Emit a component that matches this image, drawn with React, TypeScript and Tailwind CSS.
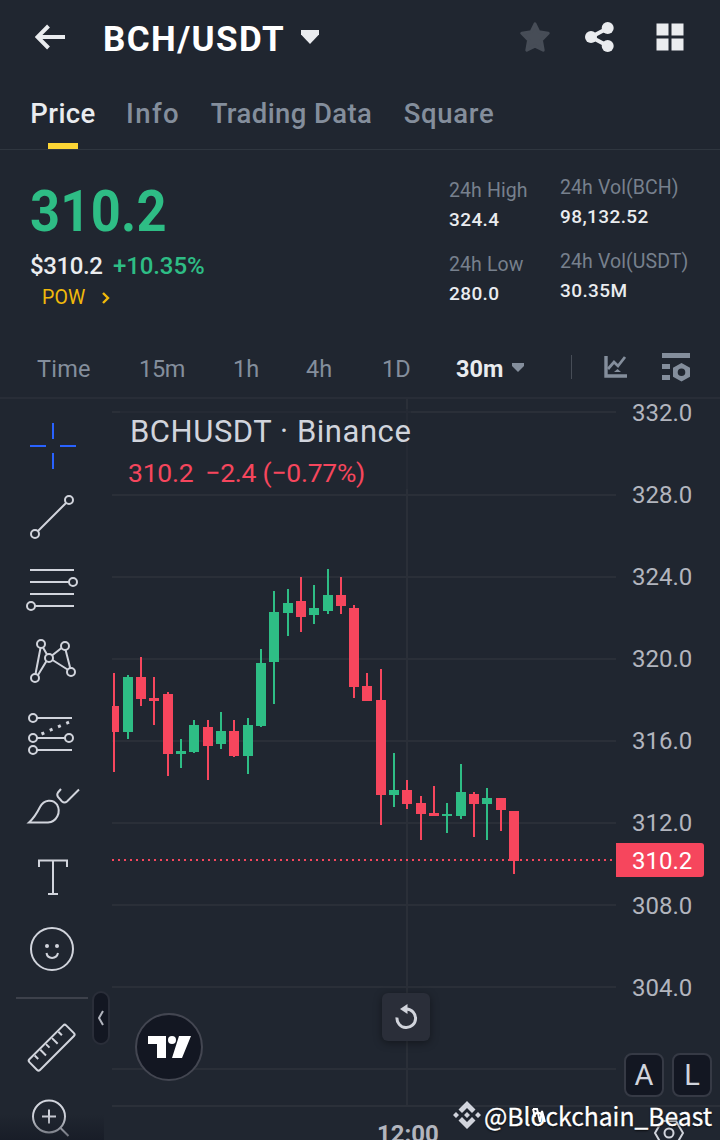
import React, { useState } from "react";

const UP = "#2ebd85";
const DOWN = "#f6465d";

// x, high, body top, body bottom, low, rising
type Candle = [number, number, number, number, number, boolean];

const candles: Candle[] = [
  [114, 673, 706, 732, 772, false],
  [128, 675, 677, 732, 739, true],
  [141, 657, 677, 699, 706, false],
  [154, 677, 698, 701, 725, false],
  [168, 692, 694, 754, 776, false],
  [181, 739, 751, 754, 768, true],
  [194, 720, 725, 752, 753, true],
  [208, 720, 727, 746, 780, false],
  [221, 712, 731, 744, 749, true],
  [234, 720, 731, 756, 757, false],
  [248, 718, 725, 756, 774, true],
  [261, 649, 663, 726, 727, true],
  [274, 591, 612, 662, 704, true],
  [288, 589, 603, 613, 636, true],
  [301, 577, 601, 617, 632, false],
  [314, 585, 608, 615, 624, true],
  [328, 569, 595, 611, 614, true],
  [341, 577, 595, 606, 614, false],
  [354, 605, 608, 687, 698, false],
  [367, 673, 686, 701, 701, false],
  [381, 669, 700, 795, 825, false],
  [394, 753, 790, 795, 807, true],
  [407, 780, 790, 804, 809, false],
  [421, 796, 803, 814, 840, false],
  [434, 786, 813, 816, 816, false],
  [447, 803, 814, 816, 833, true],
  [461, 764, 792, 816, 819, true],
  [474, 792, 794, 804, 837, false],
  [487, 788, 798, 804, 840, true],
  [501, 798, 798, 810, 831, false],
  [514, 811, 811, 861, 874, false],
];

const gridLines = [412, 495, 577, 659, 741, 823, 905, 987, 1069];
const prices = ["332.0", "328.0", "324.0", "320.0", "316.0", "312.0", "308.0", "304.0"];

const stats = [
  {
    className: "w-[111px] pt-[3px]",
    items: [
      { label: "24h High", value: "324.4" },
      { label: "24h Low", value: "280.0" },
    ],
  },
  {
    className: "w-[150px]",
    items: [
      { label: "24h Vol(BCH)", value: "98,132.52" },
      { label: "24h Vol(USDT)", value: "30.35M" },
    ],
  },
];

const tabs = [
  { name: "Price", className: "w-[64px] tracking-[0.4px]" },
  { name: "Info", className: "w-[54px] tracking-[1.4px]" },
  { name: "Trading Data", className: "w-[161px] tracking-[0.4px]" },
  { name: "Square", className: "w-[92px] tracking-[0.7px]" },
];

const Header = () => (
  <header className="flex h-[74px] items-center pl-[35px] pr-[36px] text-[#eaecef]">
    <svg width="30" height="26" viewBox="0 0 30 26" fill="none" stroke="currentColor" strokeWidth="4">
      <path d="M30 13H3M13.5 2 2.5 13l11 11" />
    </svg>
    <h1 className="ml-[38px] w-[184px] whitespace-nowrap pt-[5px] text-[35px] font-bold leading-none tracking-[1.4px] text-white">
      BCH/USDT
    </h1>
    <svg className="ml-[14px]" width="18" height="14" viewBox="0 0 18 14" fill="currentColor">
      <path d="M0 0h18v4.5L9 14 0 4.5z" />
    </svg>
    <svg className="ml-auto" width="30" height="30" viewBox="0 0 30 30" fill="#474d57" stroke="#474d57" strokeWidth="3" strokeLinejoin="round">
      <path d="m15 1.8 3.9 8 9.3 1.5-6.8 6.8 1.8 10.1-8.2-4.1-8.2 4.1 1.8-10.1-6.8-6.8 9.3-1.5z" />
    </svg>
    <svg className="ml-[35px]" width="29" height="30" viewBox="0 0 29 30" fill="currentColor">
      <path d="M6 15 23 6M6 15l17 9" stroke="currentColor" strokeWidth="4" />
      <circle cx="6" cy="15" r="6" />
      <circle cx="22.7" cy="6" r="6" />
      <circle cx="22.7" cy="24" r="6" />
    </svg>
    <svg className="ml-[42px]" width="28" height="28" viewBox="0 0 28 28" fill="currentColor">
      <path d="M.5.5h12v12H.5zM15.5.5h12v12h-12zM.5 15.5h12v12H.5zM15.5 15.5h12v12h-12z" />
    </svg>
  </header>
);

const Tabs = () => {
  const [active, setActive] = useState("Price");

  return (
    <nav className="flex h-[76px] gap-[31px] border-b border-[#2f363f] pl-[31px] text-[27.5px] font-medium">
      {tabs.map((tab) => (
        <button
          key={tab.name}
          onClick={() => setActive(tab.name)}
          className={`flex flex-col items-center justify-between whitespace-nowrap pt-[22px] leading-[36px] ${tab.className} ${
            active === tab.name ? "text-[#eaecef]" : "text-[#848e9c]"
          }`}
        >
          <span>{tab.name}</span>
          {active === tab.name && <span className="h-[6px] w-[30px] bg-[#fcd535]" />}
        </button>
      ))}
    </nav>
  );
};

const Ticker = () => (
  <section className="flex h-[189px] justify-between pl-[30px] pr-[10px]">
    <div className="flex flex-col pt-[32px]">
      <span className="w-max origin-left scale-x-[0.92] text-[57px] font-bold leading-[60px] tracking-[0.3px] text-[#2ebd85]">
        310.2
      </span>
      <div className="mt-[9px] flex gap-[10px] text-[24px] font-medium leading-[30px]">
        <span className="w-[73px] tracking-[-0.4px] text-[#eaecef]">$310.2</span>
        <span className="tracking-[-0.1px] text-[#2ebd85]">+10.35%</span>
      </div>
      <div className="mt-[5px] flex items-center pl-[12px] text-[19.5px] leading-[24px] text-[#f0b90b]">
        <span className="tracking-[0.2px]">POW</span>
        <svg className="ml-[16px]" width="8" height="12" viewBox="0 0 8 12" fill="none" stroke="currentColor" strokeWidth="2.4">
          <path d="m1 1 5 5-5 5" />
        </svg>
      </div>
    </div>
    <div className="flex pt-[23px]">
      {stats.map((column) => (
        <dl key={column.items[0].label} className={`flex flex-col gap-[16px] ${column.className}`}>
          {column.items.map((item) => (
            <div key={item.label}>
              <dt className="text-[19.5px] leading-[29px] tracking-[0.1px] text-[#77808d]">{item.label}</dt>
              <dd className="text-[19px] font-medium leading-[29px] tracking-[0.4px] text-[#eaecef]">{item.value}</dd>
            </div>
          ))}
        </dl>
      ))}
    </div>
  </section>
);

const Intervals = () => (
  <div className="flex h-[60px] items-center pl-[37px] pr-[30px] text-[23.5px] text-[#848e9c]">
    <div className="flex pt-[2px]">
      <span className="w-[102px] tracking-[0.2px]">Time</span>
      <span className="w-[94px] tracking-[-0.3px]">15m</span>
      <span className="w-[73px]">1h</span>
      <span className="w-[76px]">4h</span>
      <span className="w-[74px]">1D</span>
      <span className="w-[56px] font-bold text-[#eaecef]">30m</span>
    </div>
    <svg className="mb-[4px]" width="12" height="9" viewBox="0 0 12 9" fill="currentColor">
      <path d="M0 0h12v3L6 9 0 3z" />
    </svg>
    <span className="mb-[4px] ml-[47px] h-[24px] w-px bg-[#474d57]" />
    <svg className="mb-[5px] ml-[32px]" width="23" height="24" viewBox="0 0 23 24" fill="none" stroke="currentColor" strokeWidth="3.4">
      <path d="M2 1v20h21" />
      <path d="m4 14 6-7 4 4 7-9" strokeWidth="2.8" />
      <path d="m10 17 3.5-3 3.5 3z" fill="currentColor" stroke="none" />
    </svg>
    <svg className="mb-[4px] ml-auto" width="28" height="29" viewBox="0 0 28 29" fill="currentColor">
      <path d="M0 0h28v5H0zM0 11h8v5H0zM0 22h8v5H0z" />
      <path fillRule="evenodd" d="m19.5 10 8.5 4.700v9l-8.500 4.800-8.500-4.800v-9zm0 5.500a3.800 3.800 0 1 0 0 7.600 3.800 3.800 0 0 0 0-7.600z" />
    </svg>
  </div>
);

const Tool = ({ children, className = "h-[72px]" }: { children: React.ReactNode; className?: string }) => (
  <button className={`flex w-full shrink-0 items-center justify-center ${className}`}>
    <svg width="60" height="60" viewBox="0 0 60 60" fill="none" stroke="currentColor" strokeWidth="2">
      {children}
    </svg>
  </button>
);

const Toolbar = () => (
  <aside className="flex h-[741px] w-[104px] shrink-0 flex-col overflow-hidden pt-[11px] text-[#d1d4dc]">
    <Tool>
      <path d="M31 7v16M31 37v16M8 30h16M38 30h16" stroke="#2962ff" />
    </Tool>
    <Tool>
      <circle cx="13" cy="46" r="4" />
      <circle cx="47" cy="12" r="4" />
      <path d="m16 43 28-28" />
    </Tool>
    <Tool>
      <path d="M8 10h44M8 22h39M8 34h44M13 46h39" />
      <circle cx="51" cy="22" r="4" />
      <circle cx="9" cy="46" r="4" />
    </Tool>
    <Tool>
      <circle cx="19" cy="12" r="4" />
      <circle cx="43" cy="14" r="4" />
      <circle cx="27" cy="26" r="4" />
      <circle cx="49" cy="40" r="4" />
      <circle cx="13" cy="46" r="4" />
      <path d="m18.500 16-5 26M21 15.500l4 7M39.500 16 30 23.500M43.600 18l4.600 18M30.500 28l15 9.500M24.500 29 16 43" />
    </Tool>
    <Tool>
      <circle cx="11" cy="14" r="4" />
      <circle cx="11" cy="34" r="4" />
      <circle cx="47" cy="34" r="4" />
      <circle cx="11" cy="46" r="4" />
      <path d="M15 14h35M15 34h28M15 46h35" />
      <path d="m19.500 30 30-13" strokeWidth="3" strokeDasharray="3 6" />
    </Tool>
    <Tool>
      <path d="M7 46.500C13 41 15 37 18 31c4-8 13-8 17-2.500 4.500 8-.5 17.500-9 18zM39 13l-3 3.500q-1.500 2 0 4.500l4 4.500q2.500 2 5 0L57 13.500" />
    </Tool>
    <Tool>
      <path d="M17 19v-6.500h28V19M31 12v34M26 46h10" />
    </Tool>
    <Tool>
      <circle cx="30" cy="29" r="21" />
      <circle cx="25" cy="26" r="2" fill="currentColor" stroke="none" />
      <circle cx="35" cy="26" r="2" fill="currentColor" stroke="none" />
      <path d="M24.500 33c1 6.500 10 6.500 11.500 0" />
    </Tool>
    <span className="ml-[16px] mt-[11px] h-[2px] w-[72px] shrink-0 bg-[#3d414b]" />
    <Tool className="h-[97px]">
      <g transform="rotate(-45 30 30)">
        <rect x="4" y="22" width="52" height="15" rx="2" />
        <path d="M12.500 23v5M20.500 23v8M28.500 23v5M37 23v8M46 23v5" />
      </g>
    </Tool>
    <Tool className="h-[45px]">
      <circle cx="27" cy="27.500" r="16" />
      <path d="M27 20.500v14M20 27.500h14M38.500 39l8 8" />
    </Tool>
  </aside>
);

const CandleChart = () => (
  <svg className="block h-[741px] w-[504px]" viewBox="112 399 504 741" shapeRendering="crispEdges">
    {gridLines.map((y) => (
      <rect key={y} x="112" y={y - 1} width="504" height="2" fill="#2a2f38" />
    ))}
    <rect x="406" y="399" width="2" height="706" fill="#2a2f38" />
    {candles.map(([x, high, top, bottom, low, rising]) => (
      <g key={x} fill={rising ? UP : DOWN}>
        <rect x={x - 1} y={high} width="2" height={low - high} />
        <rect x={x - 5} y={top} width="10" height={bottom - top} />
      </g>
    ))}
    <path d="M112 860H616" stroke={DOWN} strokeWidth="2" strokeDasharray="2 4" />
  </svg>
);

const PriceAxis = () => (
  <div className="relative flex w-[104px] flex-col text-[24px] text-[#b2b5be]">
    {prices.map((price) => (
      <span key={price} className="h-[82.1px] pl-[16px] leading-[29px]">
        {price}
      </span>
    ))}
    <span className="absolute left-0 top-[444px] h-[34px] w-[88px] rounded-r-[3px] bg-[#f6465d] pl-[16px] leading-[36px] text-white">
      310.2
    </span>
    <div className="mt-[-3px] flex gap-[8px] pl-[8px]">
      {["A", "L"].map((mode) => (
        <button
          key={mode}
          className="h-[44px] w-[40px] rounded-[8px] border-2 border-[#363a45] bg-[#131722] text-[29px] leading-[40px] text-[#d1d4dc]"
        >
          {mode}
        </button>
      ))}
    </div>
  </div>
);

const Watermark = () => (
  <div className="absolute bottom-[10px] right-[8px] flex items-center gap-[3px]">
    <svg width="28" height="28" viewBox="0 0 28 28" fill="#d1d4dc">
      <path d="m14 0 8.500 8.500-3.500 3.500-5-5-5 5-3.500-3.500zM14 28l8.500-8.500-3.500-3.500-5 5-5-5-3.500 3.500zM3 11l3 3-3 3-3-3zM25 11l3 3-3 3-3-3zM14 11l3 3-3 3-3-3z" />
    </svg>
    <span className="relative whitespace-nowrap font-['Noto_Sans_CJK_SC',sans-serif] text-[24.700px] leading-[30px] text-white [-webkit-text-stroke:0.3px_white] [text-shadow:0_1px_2px_#000]">
      @Blockchain_Beast
      <svg className="absolute left-[48px] top-[8px]" width="14" height="16" viewBox="0 0 14 16" fill="none" stroke="white" strokeWidth="2">
        <path d="M1 1h4l3 13 2-11 3 11M1 1l2 8" />
      </svg>
    </span>
  </div>
);

const App = () => {
  return (
    <main className="relative h-[1140px] w-[720px] overflow-hidden bg-[#202630] font-[Roboto,sans-serif]">
      <Header />
      <Tabs />
      <Ticker />
      <Intervals />

      <section className="relative flex h-[741px] gap-[8px] before:absolute before:left-0 before:top-[-2px] before:h-[2px] before:w-full before:bg-[#282d37]">
        <Toolbar />
        <div className="flex">
          <CandleChart />
          <PriceAxis />
        </div>

        <div className="absolute left-[120px] top-[10px] whitespace-nowrap bg-[#202630]/50 pl-[8px] pt-[5px]">
          <p className="pl-[2px] text-[31px] leading-[36px] tracking-[0.55px] text-[#d1d4dc]">BCHUSDT · Binance</p>
          <p className="mt-[7px] text-[26.5px] leading-[32px] tracking-[-0.25px] text-[#f6465d]">
            310.2<span className="ml-[12px]">−2.4 (−0.77%)</span>
          </p>
        </div>

        <button className="absolute left-[92px] top-[592px] flex h-[54px] w-[18px] items-center justify-center rounded-full border-2 border-[#2a2e39] bg-[#131722]">
          <svg width="6" height="16" viewBox="0 0 6 16" fill="none" stroke="#b2b5be" strokeWidth="2">
            <path d="M5 1 1 8l4 7" />
          </svg>
        </button>

        <div className="absolute left-[135px] top-[614px] flex h-[68px] w-[68px] items-center justify-center rounded-full border-2 border-[#434651] bg-[#131722]">
          <svg width="43" height="22" viewBox="0 0 43 22" fill="white">
            <path d="M0 0h18v22H9V8H0zM31 0h12l-9 22H24z" />
            <circle cx="24" cy="4" r="4" />
          </svg>
        </div>

        <button className="absolute left-[382px] top-[594px] flex h-[48px] w-[48px] items-center justify-center rounded-[6px] bg-[#2a2e39] shadow-[0_2px_8px_rgba(0,0,0,0.4)]">
          <svg width="24" height="26" viewBox="0 0 24 26" fill="none" stroke="#d1d4dc" strokeWidth="3">
            <path d="M3 13.500a9.300 9.300 0 1 0 9.500-8.500" />
            <path d="m13.500 0v10L6 5z" fill="#d1d4dc" stroke="none" />
          </svg>
        </button>

        <div className="absolute left-[112px] top-[706px] h-[2px] w-[608px] bg-[#2b3039]" />
        <span className="absolute left-[377px] top-[721px] text-[24px] font-bold leading-[28px] text-[#b2b5be]">12:00</span>
        <svg className="absolute left-[654px] top-[720px]" width="30" height="28" viewBox="0 0 30 28" fill="none" stroke="#d1d4dc" strokeWidth="2">
          <path d="M1 14 8 2h14l7 12-7 12H8z" />
          <circle cx="15" cy="14" r="4.500" />
        </svg>
        <div className="absolute bottom-0 left-0 h-[26px] w-[104px] bg-linear-to-b from-transparent to-[#131722]/60" />
        <Watermark />
      </section>
    </main>
  );
};

export default App;
